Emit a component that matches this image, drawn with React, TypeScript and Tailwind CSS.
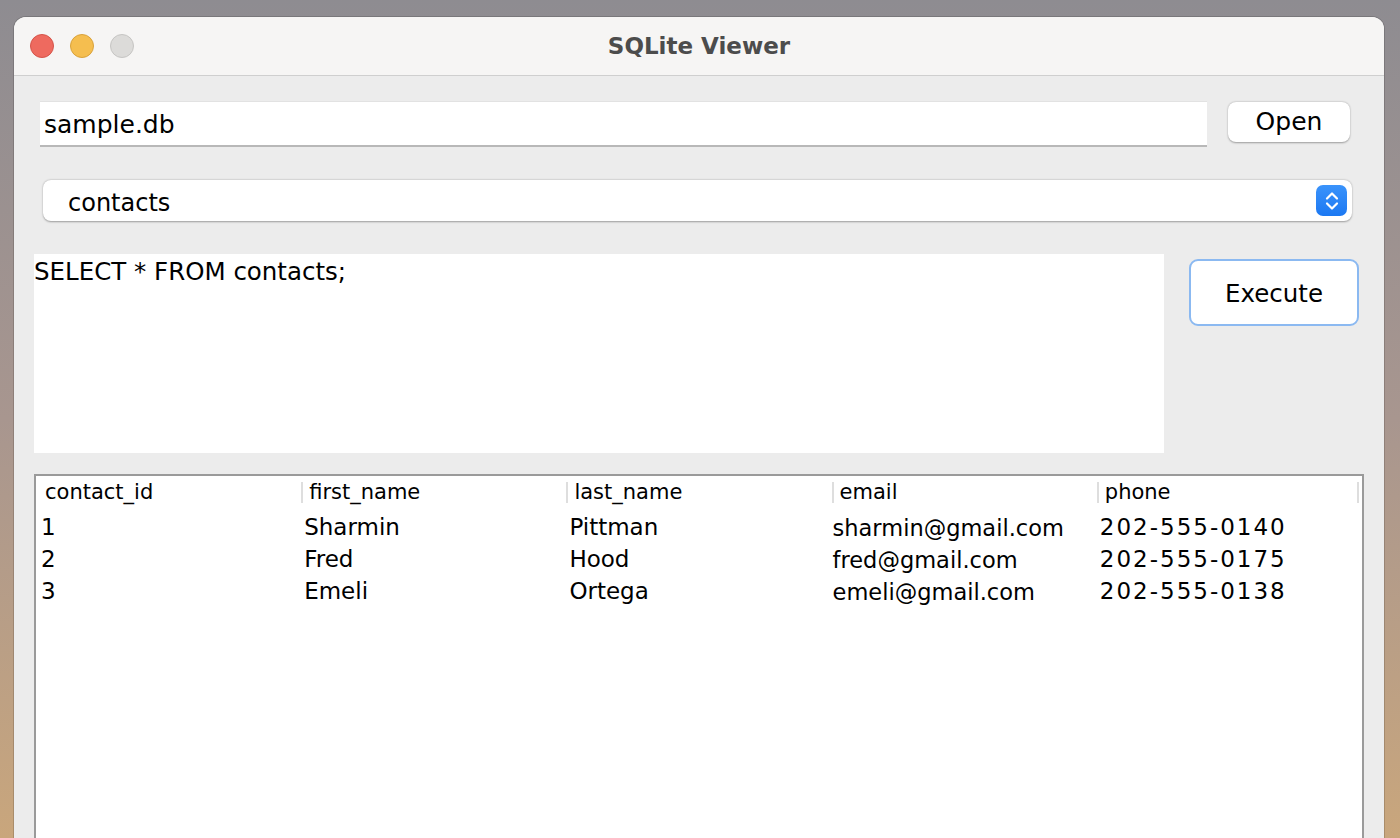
import React from 'react';

const font = { fontFamily: '"DejaVu Sans", "Liberation Sans", sans-serif' };

const columns = ['contact_id', 'first_name', 'last_name', 'email', 'phone'];
const rows = [
  ['1', 'Sharmin', 'Pittman', 'sharmin@gmail.com', '202-555-0140'],
  ['2', 'Fred', 'Hood', 'fred@gmail.com', '202-555-0175'],
  ['3', 'Emeli', 'Ortega', 'emeli@gmail.com', '202-555-0138'],
];

const Stepper: React.FC = () => (
  <div className="w-[31px] h-[31px] rounded-[7px] bg-gradient-to-b from-[#3a93fb] to-[#1b78f2] flex items-center justify-center">
    <svg width="16" height="22" viewBox="0 0 16 22" fill="none">
      <path d="M3 8.5 L8 3.5 L13 8.5" stroke="white" strokeWidth="2.2" strokeLinecap="round" strokeLinejoin="round" />
      <path d="M3 13.5 L8 18.5 L13 13.5" stroke="white" strokeWidth="2.2" strokeLinecap="round" strokeLinejoin="round" />
    </svg>
  </div>
);

export default function App() {
  return (
    <div
      className="w-[1400px] h-[838px] overflow-hidden bg-gradient-to-b from-[#8e8c91] via-[#a8968f] to-[#c9a67c] pt-[17px] pl-[14px]"
      style={font}
    >
      <div className="w-[1370px] h-[840px] rounded-t-[12px] overflow-hidden bg-[#ececec] flex flex-col shadow-[0_0_0_1px_rgba(0,0,0,0.15)]">
        {/* Title bar */}
        <div className="relative h-[59px] shrink-0 bg-[#f6f5f4] border-b border-[#cfcfcf] flex items-center">
          <div className="flex items-center gap-[16px] pl-[16px]">
            <span className="w-[24px] h-[24px] rounded-full bg-[#ee6a5f] border border-[#d5544a]" />
            <span className="w-[24px] h-[24px] rounded-full bg-[#f5be4f] border border-[#d9a23b]" />
            <span className="w-[24px] h-[24px] rounded-full bg-[#dcdbd9] border border-[#c6c5c3]" />
          </div>
          <div className="absolute inset-0 flex items-center justify-center text-[23px] font-bold text-[#4c4c4c]">
            SQLite Viewer
          </div>
        </div>

        {/* Content */}
        <div className="flex-1 flex flex-col">
          <div className="flex items-start pt-[25px] pl-[26px]">
            <div className="w-[1167px] h-[46px] bg-white border-b-2 border-[#b8b8b8] border-t border-t-[#e2e2e2] flex items-center pl-[4px] pt-[2px] text-[25px] text-black">
              sample.db
            </div>
            <button className="ml-[21px] mt-[1px] w-[122px] h-[40px] rounded-[8px] bg-white shadow-[0_0.5px_2px_rgba(0,0,0,0.35)] text-[25px] text-black flex items-center justify-center">
              Open
            </button>
          </div>

          <div className="mt-[33px] ml-[29px] w-[1309px] h-[41px] rounded-[8px] bg-white shadow-[0_0.5px_2px_rgba(0,0,0,0.35)] flex items-center justify-between pl-[25px] pr-[5px]">
            <span className="text-[24px] text-black pt-[4px]">contacts</span>
            <Stepper />
          </div>

          <div className="mt-[33px] flex items-start">
            <div className="ml-[20px] w-[1130px] h-[199px] bg-white text-[24.5px] text-black leading-[36px]">
              SELECT * FROM contacts;
            </div>
            <button className="ml-[25px] mt-[5px] w-[170px] h-[67px] rounded-[9px] bg-white border-[2.5px] border-[#8bb9f1] text-[24.5px] text-black flex items-center justify-center pt-[4px]">
              Execute
            </button>
          </div>

          <div className="mt-[21px] ml-[20px] w-[1330px] flex-1 bg-white border-2 border-[#9a9a9a] border-b-0">
            <div className="grid grid-cols-5 h-[33px] items-center text-[21px] text-black">
              {columns.map((c, i) => (
                <div
                  key={c}
                  className={`h-[21px] flex items-center ${i === 0 ? 'pl-[9px]' : 'border-l-2 border-[#dedede] pl-[6px]'} ${i === 4 ? 'border-r-2 border-r-[#dedede] mr-[3px]' : ''}`}
                >
                  {c}
                </div>
              ))}
            </div>
            {rows.map((r) => (
              <div key={r[0]} className="grid grid-cols-5 h-[32px] items-center text-[23px] text-black">
                {r.map((v, i) => (
                  <div
                    key={i}
                    className={
                      i === 0
                        ? 'pl-[5px]'
                        : i === 4
                          ? 'pl-[3px] tracking-[2px]'
                          : i === 3
                            ? 'pl-[1px] pt-[3px] text-[22.5px]'
                            : 'pl-[3px]'
                    }
                  >
                    {v}
                  </div>
                ))}
              </div>
            ))}
          </div>
        </div>
      </div>
    </div>
  );
}
